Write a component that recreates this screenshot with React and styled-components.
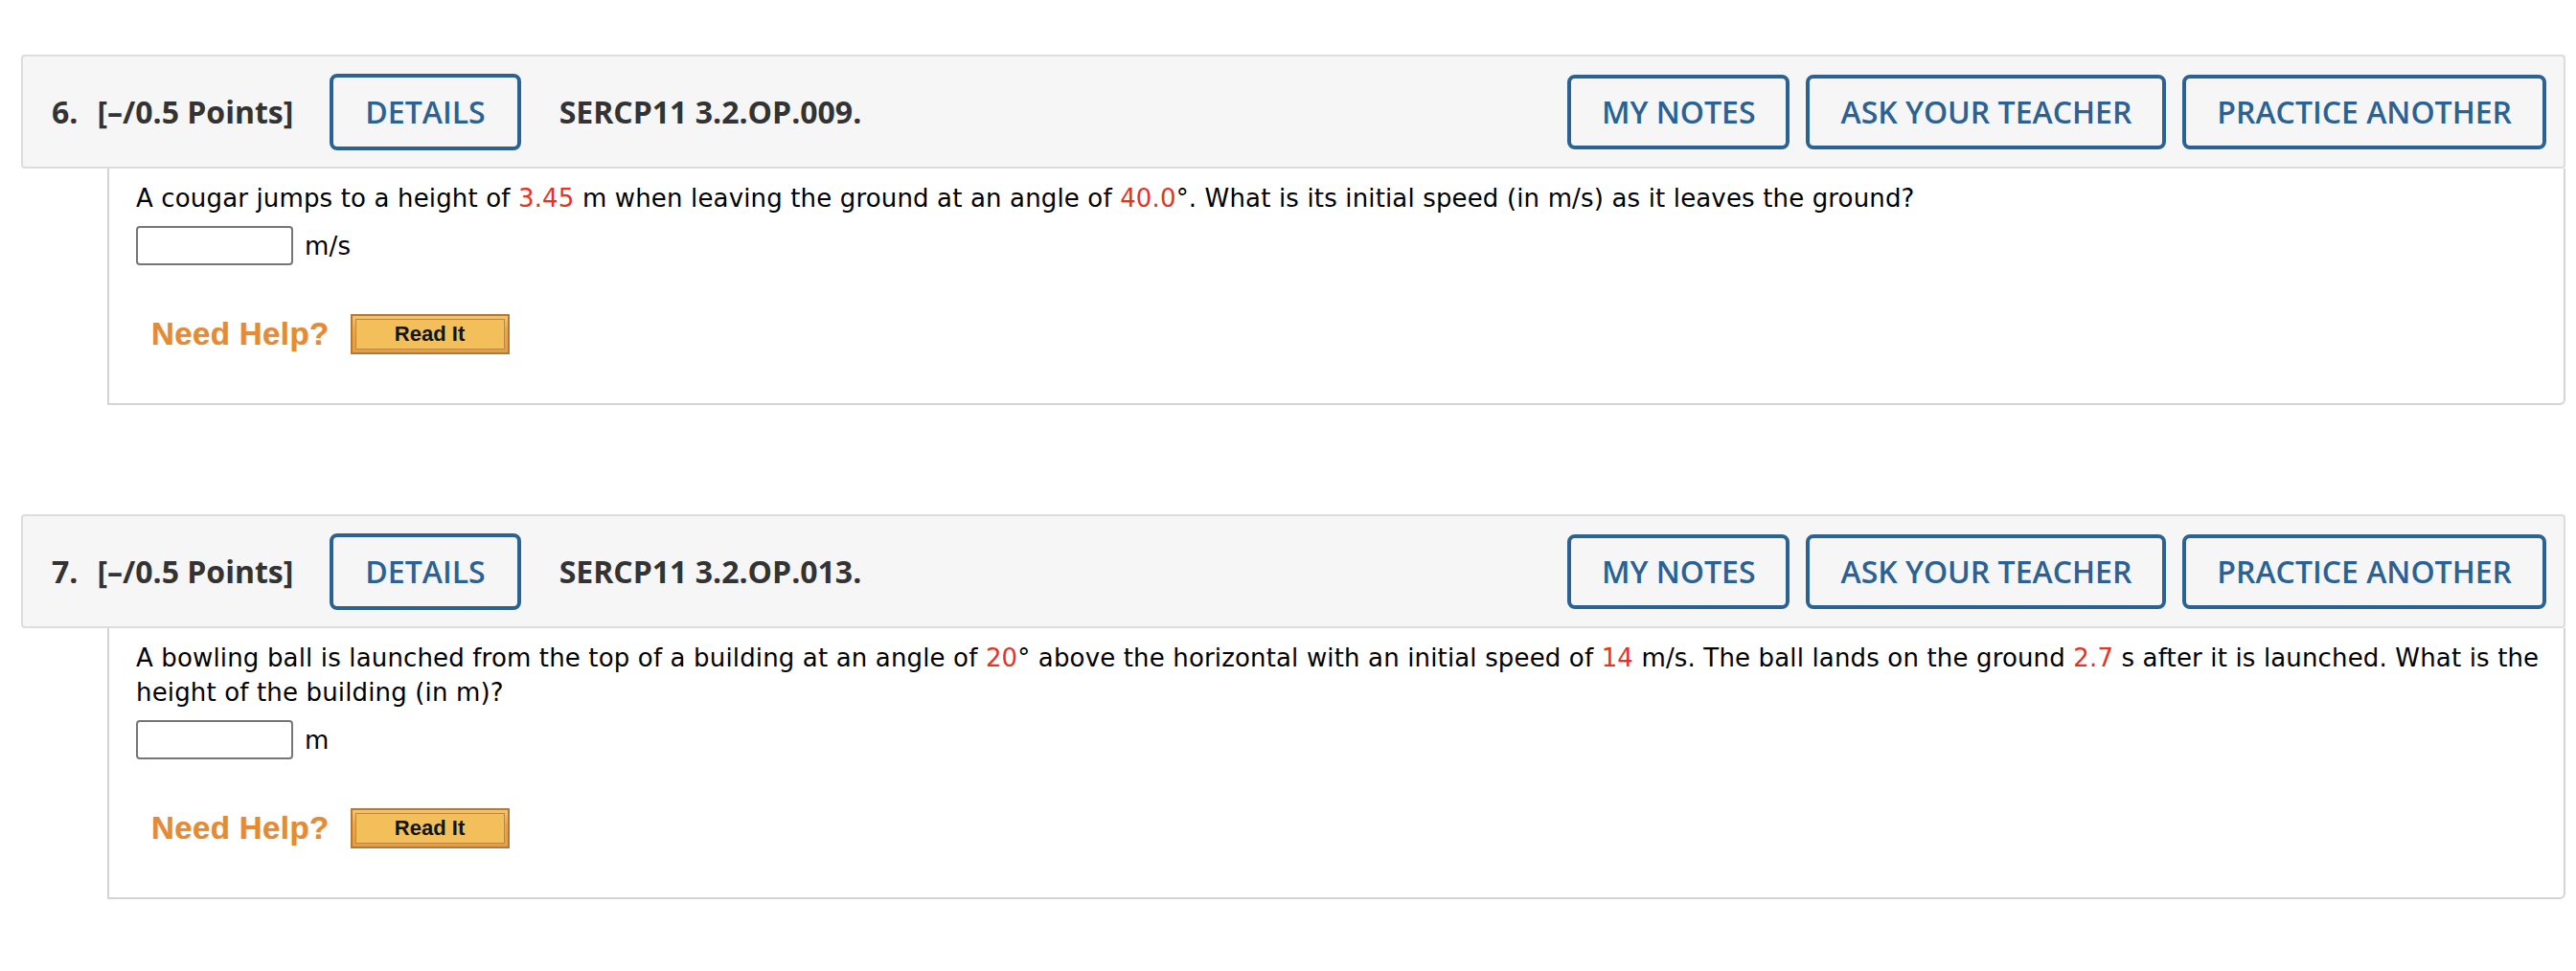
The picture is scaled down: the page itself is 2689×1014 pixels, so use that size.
import React from "react";
import styled, { createGlobalStyle } from "styled-components";

const GlobalStyle = createGlobalStyle`
  html, body {
    margin: 0;
    padding: 0;
    background: #fff;
  }
  body {
    font-family: "DejaVu Sans", Verdana, sans-serif;
    color: #000;
  }
`;

const Page = styled.div`
  padding: 57px 11px 40px 22px;
  display: flex;
  flex-direction: column;
  gap: 114px;
`;

const Question = styled.section`
  display: flex;
  flex-direction: column;
`;

const Header = styled.div`
  box-sizing: border-box;
  height: 119px;
  display: flex;
  align-items: center;
  padding: 0 18px 0 30px;
  background: #f6f6f6;
  border: 2px solid #dddddd;
  border-radius: 4px;
  font-family: "Open Sans", sans-serif;
`;

const Number = styled.span`
  font-size: 32px;
  font-weight: 700;
  color: #333;
  margin-right: 20px;
`;

const Points = styled.span`
  font-size: 32px;
  font-weight: 700;
  color: #333;
  margin-right: 38px;
`;

const Code = styled.span`
  font-size: 32px;
  font-weight: 700;
  color: #333;
  margin-left: 40px;
`;

const Actions = styled.div`
  margin-left: auto;
  display: flex;
  gap: 17px;
`;

const OutlineButton = styled.button`
  box-sizing: border-box;
  height: ${(p) => (p.$tall ? "80px" : "78px")};
  padding: 0 ${(p) => (p.$tall ? "33px" : "32px")};
  border: 4px solid #2b6294;
  border-radius: 8px;
  background: transparent;
  color: #2b6294;
  font-family: "Open Sans", sans-serif;
  font-size: 32px;
  font-weight: 600;
  cursor: pointer;
  white-space: nowrap;
`;

const Body = styled.div`
  margin-left: 90px;
  padding: 13px 16px 51px 28px;
  border: 2px solid #d4d4d4;
  border-top: none;
  border-radius: 0 0 6px 0;
  font-size: 26px;
  line-height: 36px;
  letter-spacing: 0.15px;
`;

const Prompt = styled.p`
  margin: 0;
`;

const Red = styled.span`
  color: #e8321f;
`;

const AnswerRow = styled.div`
  display: flex;
  align-items: center;
  gap: 12px;
  margin-top: 11px;
`;

const AnswerInput = styled.input`
  box-sizing: border-box;
  width: 164px;
  height: 41px;
  border: 2px solid #767676;
  border-radius: 4px;
  background: #fff;
`;

const Unit = styled.span`
  font-size: 26px;
`;

const HelpRow = styled.div`
  display: flex;
  align-items: center;
  gap: 22px;
  margin-top: 51px;
  padding-left: 16px;
`;

const NeedHelp = styled.span`
  font-family: "Liberation Sans", Arial, sans-serif;
  font-weight: 700;
  font-size: 33px;
  letter-spacing: 0.4px;
  color: #e58a35;
  text-shadow: 0 0 1px rgba(229, 138, 53, 0.6);
`;

const ReadIt = styled.button`
  box-sizing: border-box;
  width: 166px;
  height: 42px;
  padding: 3px;
  border: 2px solid #b27a36;
  background: linear-gradient(#f6c274, #eba548 40%, #e99d3f);
  display: flex;
  cursor: pointer;
`;

const ReadItFace = styled.span`
  flex: 1;
  display: flex;
  align-items: center;
  justify-content: center;
  border: 1px solid #bb8843;
  background: #f3bf5b;
  font-family: "Liberation Sans", Arial, sans-serif;
  font-weight: 700;
  font-size: 22px;
  color: #141414;
`;

const questions = [
  {
    num: 6,
    code: "SERCP11 3.2.OP.009.",
    unit: "m/s",
    prompt: (
      <>
        A cougar jumps to a height of <Red>3.45</Red> m when leaving the ground
        at an angle of <Red>40.0</Red>°. What is its initial speed (in m/s) as
        it leaves the ground?
      </>
    ),
  },
  {
    num: 7,
    code: "SERCP11 3.2.OP.013.",
    unit: "m",
    prompt: (
      <>
        A bowling ball is launched from the top of a building at an angle of{" "}
        <Red>20</Red>° above the horizontal with an initial speed of{" "}
        <Red>14</Red> m/s. The ball lands on the ground <Red>2.7</Red> s after
        it is launched. What is the height of the building (in m)?
      </>
    ),
  },
];

const QuestionCard = ({ q }) => (
  <Question>
    <Header>
      <Number>{q.num}.</Number>
      <Points>[–/0.5 Points]</Points>
      <OutlineButton $tall>DETAILS</OutlineButton>
      <Code>{q.code}</Code>
      <Actions>
        <OutlineButton>MY NOTES</OutlineButton>
        <OutlineButton>ASK YOUR TEACHER</OutlineButton>
        <OutlineButton>PRACTICE ANOTHER</OutlineButton>
      </Actions>
    </Header>
    <Body>
      <Prompt>{q.prompt}</Prompt>
      <AnswerRow>
        <AnswerInput type="text" />
        <Unit>{q.unit}</Unit>
      </AnswerRow>
      <HelpRow>
        <NeedHelp>Need Help?</NeedHelp>
        <ReadIt>
          <ReadItFace>Read It</ReadItFace>
        </ReadIt>
      </HelpRow>
    </Body>
  </Question>
);

const App = () => (
  <>
    <GlobalStyle />
    <Page>
      {questions.map((q) => (
        <QuestionCard key={q.num} q={q} />
      ))}
    </Page>
  </>
);

export default App;
